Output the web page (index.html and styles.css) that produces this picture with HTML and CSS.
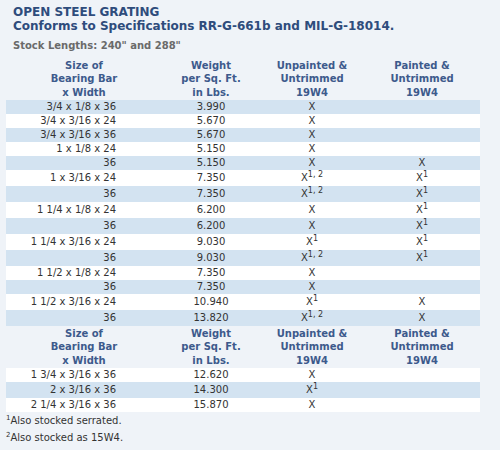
FILE: index.html
```html
<!DOCTYPE html>
<html>
<head>
<meta charset="utf-8">
<link rel="stylesheet" href="styles.css">
</head>
<body>
<div class="page">
  <h1 class="title">OPEN STEEL GRATING<br>Conforms to Specifications RR-G-661b and MIL-G-18014.</h1>
  <p class="stock">Stock Lengths: 240" and 288"</p>
  <table class="grid">
    <colgroup>
      <col class="c1"><col class="c2"><col class="c3"><col class="c4">
    </colgroup>
    <tr class="head">
      <th>Size of<br>Bearing Bar<br>x Width</th>
      <th>Weight<br>per Sq. Ft.<br>in Lbs.</th>
      <th>Unpainted &amp;<br>Untrimmed<br>19W4</th>
      <th>Painted &amp;<br>Untrimmed<br>19W4</th>
    </tr>
    <tr class="b"><td class="size">3/4 x 1/8 x 36</td><td>3.990</td><td>X</td><td></td></tr>
    <tr class="w"><td class="size">3/4 x 3/16 x 24</td><td>5.670</td><td>X</td><td></td></tr>
    <tr class="b"><td class="size">3/4 x 3/16 x 36</td><td>5.670</td><td>X</td><td></td></tr>
    <tr class="w"><td class="size">1 x 1/8 x 24</td><td>5.150</td><td>X</td><td></td></tr>
    <tr class="b"><td class="size">36</td><td>5.150</td><td>X</td><td>X</td></tr>
    <tr class="w"><td class="size">1 x 3/16 x 24</td><td>7.350</td><td>X<sup>1, 2</sup></td><td>X<sup>1</sup></td></tr>
    <tr class="b"><td class="size">36</td><td>7.350</td><td>X<sup>1, 2</sup></td><td>X<sup>1</sup></td></tr>
    <tr class="w"><td class="size">1 1/4 x 1/8 x 24</td><td>6.200</td><td>X</td><td>X<sup>1</sup></td></tr>
    <tr class="b"><td class="size">36</td><td>6.200</td><td>X</td><td>X<sup>1</sup></td></tr>
    <tr class="w"><td class="size">1 1/4 x 3/16 x 24</td><td>9.030</td><td>X<sup>1</sup></td><td>X<sup>1</sup></td></tr>
    <tr class="b"><td class="size">36</td><td>9.030</td><td>X<sup>1, 2</sup></td><td>X<sup>1</sup></td></tr>
    <tr class="w"><td class="size">1 1/2 x 1/8 x 24</td><td>7.350</td><td>X</td><td></td></tr>
    <tr class="b"><td class="size">36</td><td>7.350</td><td>X</td><td></td></tr>
    <tr class="w"><td class="size">1 1/2 x 3/16 x 24</td><td>10.940</td><td>X<sup>1</sup></td><td>X</td></tr>
    <tr class="b"><td class="size">36</td><td>13.820</td><td>X<sup>1, 2</sup></td><td>X</td></tr>
    <tr class="head">
      <th>Size of<br>Bearing Bar<br>x Width</th>
      <th>Weight<br>per Sq. Ft.<br>in Lbs.</th>
      <th>Unpainted &amp;<br>Untrimmed<br>19W4</th>
      <th>Painted &amp;<br>Untrimmed<br>19W4</th>
    </tr>
    <tr class="w"><td class="size">1 3/4 x 3/16 x 36</td><td>12.620</td><td>X</td><td></td></tr>
    <tr class="b"><td class="size">2 x 3/16 x 36</td><td>14.300</td><td>X<sup>1</sup></td><td></td></tr>
    <tr class="w"><td class="size">2 1/4 x 3/16 x 36</td><td>15.870</td><td>X</td><td></td></tr>
  </table>
  <p class="note"><sup>1</sup>Also stocked serrated.</p>
  <p class="note"><sup>2</sup>Also stocked as 15W4.</p>
</div>
</body>
</html>
```

FILE: styles.css
```css
html, body {
  margin: 0;
  padding: 0;
  background: #eff3f8;
}
body {
  font-family: "DejaVu Sans", Verdana, sans-serif;
  color: #333;
}
.page {
  padding: 5px 6px 0 6px;
  width: 474px;
}
.title {
  margin: 0 0 0 7px;
  font-size: 12px;
  line-height: 14px;
  font-weight: bold;
  color: #2e4c7c;
}
.stock {
  margin: 6px 0 6px 7px;
  font-size: 10px;
  line-height: 13px;
  font-weight: bold;
  color: #6a6a6a;
}
.grid {
  width: 474px;
  border-collapse: collapse;
  table-layout: fixed;
  font-size: 10px;
}
.c1 { width: 156px; }
.c2 { width: 98px; }
.c3 { width: 104px; }
.c4 { width: 116px; }
.grid th {
  font-weight: bold;
  color: #3d5a8c;
  line-height: 13.5px;
  padding: 0;
  height: 42px;
  text-align: center;
  vertical-align: middle;
}
.grid td {
  padding: 0;
  height: 14px;
  line-height: 14px;
  text-align: center;
  color: #333;
}
.grid td.size {
  text-align: right;
  padding-right: 46px;
}
.grid tr.b { background: #d3e3f1; }
.grid tr.w { background: #ffffff; }
.grid sup {
  font-size: 8px;
  line-height: 8px;
  vertical-align: 4px;
}
.grid td:has(sup) {
  height: 16px;
}
.note {
  margin: 1px 0 0 0;
  font-size: 10px;
  line-height: 16px;
  color: #333;
}
.note sup {
  font-size: 7px;
  vertical-align: 4px;
  line-height: 7px;
}
```
